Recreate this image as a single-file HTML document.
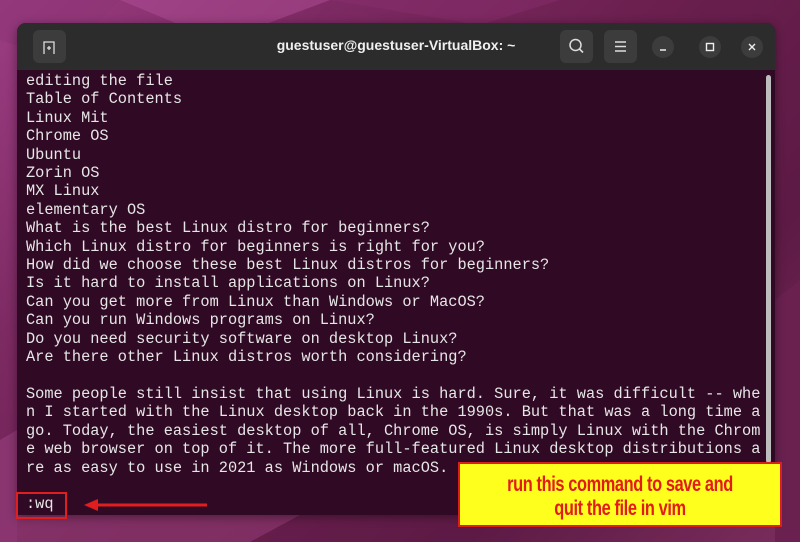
<!DOCTYPE html>
<html><head><style>
body{margin:0;width:800px;height:542px;overflow:hidden;position:relative;
background:linear-gradient(135deg,#9c3d83 0%,#7d2a63 25%,#6a1f4e 50%,#5d1a45 75%,#7a2d5c 100%);font-family:"Liberation Sans",sans-serif}
.facet{position:absolute}
.win{position:absolute;left:17px;top:23px;width:758px;height:492px;background:#300a24;border-radius:9px 9px 0 0;overflow:hidden;box-shadow:0 2px 10px rgba(0,0,0,.4)}
.tb{position:absolute;left:0;top:0;width:758px;height:47px;background:#2c2c2c}
.title{position:absolute;left:0;right:0;top:14px;text-align:center;color:#f0f0f0;font-weight:bold;font-size:14px}
.btn{position:absolute;top:7px;width:33px;height:33px;background:#3c3c3c;border-radius:6px}
.circ{position:absolute;top:13px;width:22px;height:22px;background:#3c3c3c;border-radius:50%;color:#eee;font-size:12px;text-align:center;line-height:22px}
pre{position:absolute;left:9px;top:49px;margin:0;font-family:"Liberation Mono",monospace;font-size:15.3px;line-height:18.4px;color:#e6e6e6;letter-spacing:0}
.sb{position:absolute;left:749px;top:52px;width:5px;height:388px;background:#bdbdbd;border-radius:3px}
.box{position:absolute;left:458px;top:462px;width:324px;height:65px;background:#ffff1e;border:2px solid #d82020;box-sizing:border-box}
.bt{position:absolute;left:0;right:0;text-align:center;color:#e21b1b;font-weight:bold;font-size:21px;transform:scaleX(0.78);white-space:nowrap;letter-spacing:-0.5px}
</style></head><body>
<svg class="facet" width="800" height="542" style="left:0;top:0">
<polygon points="0,0 120,0 60,60 0,40" fill="#8e3576" opacity=".6"/>
<polygon points="120,0 330,0 250,30 180,25" fill="#b04d95" opacity=".5"/>
<polygon points="330,0 560,0 480,25" fill="#8b2f70" opacity=".4"/>
<polygon points="0,440 17,430 17,542 0,542" fill="#8a3570"/>
<polygon points="775,300 800,280 800,542 775,542" fill="#6b2150"/>
<polygon points="17,515 300,515 250,542 17,542" fill="#8f3a72" opacity=".6"/>
</svg>
<div class="win">
<div class="tb">
<div class="btn" style="left:16px"><svg width="33" height="33"><path d="M11 24 V12 H21 V24 M14 18 H18 M16 16 V20" stroke="#ddd" stroke-width="1.3" fill="none"/></svg></div>
<div class="title">guestuser@guestuser-VirtualBox: ~</div>
<div class="btn" style="left:543px"><svg width="33" height="33"><circle cx="15.5" cy="15" r="5.5" stroke="#ddd" stroke-width="1.5" fill="none"/><path d="M19.5 19 L23 22.5" stroke="#ddd" stroke-width="1.6"/></svg></div>
<div class="btn" style="left:587px"><svg width="33" height="33"><path d="M11 12 H22 M11 16.5 H22 M11 21 H22" stroke="#ddd" stroke-width="1.4"/></svg></div>
<div class="circ" style="left:635px"><svg width="22" height="22"><path d="M8 14 H14" stroke="#eee" stroke-width="1.4"/></svg></div>
<div class="circ" style="left:682px"><svg width="22" height="22"><rect x="7.5" y="7.5" width="7" height="7" stroke="#eee" stroke-width="1.4" fill="none"/></svg></div>
<div class="circ" style="left:724px"><svg width="22" height="22"><path d="M8 8 L14 14 M14 8 L8 14" stroke="#eee" stroke-width="1.4"/></svg></div>
</div>
<pre>editing the file
Table of Contents
Linux Mit
Chrome OS
Ubuntu
Zorin OS
MX Linux
elementary OS
What is the best Linux distro for beginners?
Which Linux distro for beginners is right for you?
How did we choose these best Linux distros for beginners?
Is it hard to install applications on Linux?
Can you get more from Linux than Windows or MacOS?
Can you run Windows programs on Linux?
Do you need security software on desktop Linux?
Are there other Linux distros worth considering?

Some people still insist that using Linux is hard. Sure, it was difficult -- whe
n I started with the Linux desktop back in the 1990s. But that was a long time a
go. Today, the easiest desktop of all, Chrome OS, is simply Linux with the Chrom
e web browser on top of it. The more full-featured Linux desktop distributions a
re as easy to use in 2021 as Windows or macOS.

:wq</pre>
<div class="sb"></div>
</div>
<div style="position:absolute;left:16px;top:492px;width:47px;height:23px;border:2.5px solid #e01e1e"></div>
<svg style="position:absolute;left:0;top:0" width="800" height="542"><path d="M95 505 H207" stroke="#e01e1e" stroke-width="3"/><polygon points="84,505 98,499 98,511" fill="#e01e1e"/></svg>
<div class="box"><div class="bt" style="top:9px">run this command to save and</div><div class="bt" style="top:33px">quit the file in vim</div></div>
</body></html>
